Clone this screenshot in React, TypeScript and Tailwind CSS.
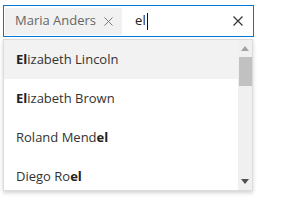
import React from "react";

const XIcon = ({ size = 10, color = "#333", sw = 1.3 }: { size?: number; color?: string; sw?: number }) => (
  <svg width={size} height={size} viewBox="0 0 10 10">
    <path d="M0.5 0.5 L9.5 9.5 M9.5 0.5 L0.5 9.5" stroke={color} strokeWidth={sw} fill="none" />
  </svg>
);

const items: [string, string, string][] = [
  ["", "El", "izabeth Lincoln"],
  ["", "El", "izabeth Brown"],
  ["Roland Mend", "el", ""],
  ["Diego Ro", "el", ""],
];

export default function App() {
  return (
    <div className="w-[293px] h-[200px] bg-white relative" style={{ fontFamily: '"Open Sans", "Noto Sans", sans-serif' }}>
      <div className="absolute left-[3px] top-[5px] w-[251px] h-[32px] border border-[#0078d7] flex items-center pl-[1px] pr-[10px]">
        <div className="h-[27px] bg-[#f1f1f1] flex items-center pl-[10px] pr-[9px] gap-[8px]">
          <span className="text-[13px] text-[#666]">Maria Anders</span>
          <XIcon size={9} color="#777" sw={1.1} />
        </div>
        <div className="ml-[13px] flex items-center text-[13px] text-[#222]">
          el<span className="w-[1px] h-[17px] bg-[#111] ml-[1px]"></span>
        </div>
        <div className="ml-auto flex items-center">
          <XIcon size={10} color="#333" sw={1.2} />
        </div>
      </div>
      <div className="absolute left-[3px] top-[39px] w-[250px] h-[152px] bg-white border border-[#dcdcdc] shadow-[0_2px_4px_rgba(0,0,0,0.18)] flex overflow-hidden">
        <div className="flex-1 flex flex-col">
          {items.map((it, i) => (
            <div
              key={i}
              className={`h-[39px] shrink-0 flex items-center pl-[12px] text-[13px] text-[#333] ${i === 0 ? "bg-[#f2f2f2]" : ""}`}
            >
              <span>
                {it[0]}
                <span className="font-bold text-[#222]">{it[1]}</span>
                {it[2]}
              </span>
            </div>
          ))}
        </div>
        <div className="w-[14px] bg-[#f0f0f0] flex flex-col items-center">
          <div className="h-[17px] flex items-center justify-center">
            <svg width="8" height="5" viewBox="0 0 8 5"><path d="M0 5 L4 0 L8 5 Z" fill="#a3a3a3" /></svg>
          </div>
          <div className="w-[13px] h-[29px] bg-[#c1c1c1]"></div>
          <div className="flex-1"></div>
          <div className="h-[17px] flex items-center justify-center">
            <svg width="8" height="5" viewBox="0 0 8 5"><path d="M0 0 L8 0 L4 5 Z" fill="#505050" /></svg>
          </div>
        </div>
      </div>
    </div>
  );
}
